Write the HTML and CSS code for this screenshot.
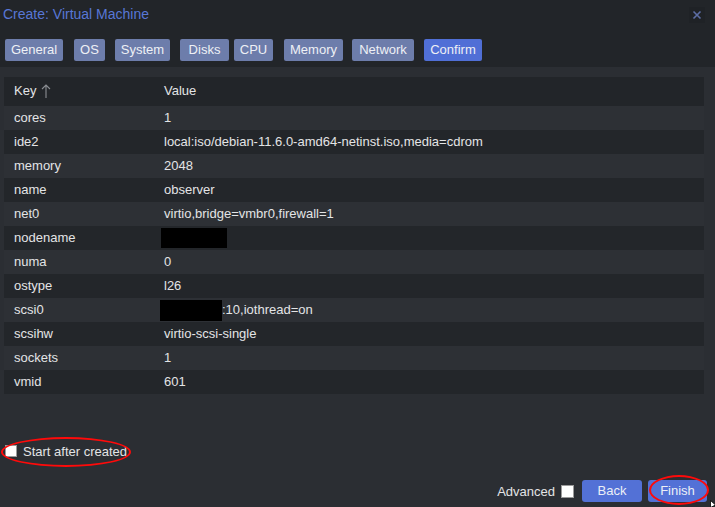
FILE: index.html
```html
<!DOCTYPE html>
<html>
<head>
<meta charset="utf-8">
<link rel="stylesheet" href="styles.css">
</head>
<body>
<div class="window">
  <div class="header">
    <div class="titlebar">
      <span class="title">Create: Virtual Machine</span>
      <span class="close"><svg width="10" height="10" viewBox="0 0 10 10"><path d="M1.5 1.5 L8.5 8.5 M8.5 1.5 L1.5 8.5" stroke="#5d6ea6" stroke-width="1.6" fill="none"/></svg></span>
    </div>
    <div class="tabs">
      <span class="tab t-general">General</span>
      <span class="tab t-os">OS</span>
      <span class="tab t-system">System</span>
      <span class="tab t-disks">Disks</span>
      <span class="tab t-cpu">CPU</span>
      <span class="tab t-memory">Memory</span>
      <span class="tab t-network">Network</span>
      <span class="tab t-confirm active">Confirm</span>
    </div>
  </div>
  <div class="main">
    <div class="grid">
      <div class="row head"><div class="key">Key <svg class="arrow" width="10" height="16" viewBox="0 0 10 16"><path d="M5 15 L5 2 M1 6 L5 2 L9 6" stroke="#8b8e93" stroke-width="1.1" fill="none"/></svg></div><div class="val">Value</div></div>
      <div class="row odd"><div class="key">cores</div><div class="val">1</div></div>
      <div class="row"><div class="key">ide2</div><div class="val">local:iso/debian-11.6.0-amd64-netinst.iso,media=cdrom</div></div>
      <div class="row odd"><div class="key">memory</div><div class="val">2048</div></div>
      <div class="row"><div class="key">name</div><div class="val">observer</div></div>
      <div class="row odd"><div class="key">net0</div><div class="val">virtio,bridge=vmbr0,firewall=1</div></div>
      <div class="row"><div class="key">nodename</div><div class="val"><span class="redact r-node"></span></div></div>
      <div class="row odd"><div class="key">numa</div><div class="val">0</div></div>
      <div class="row"><div class="key">ostype</div><div class="val">l26</div></div>
      <div class="row odd"><div class="key">scsi0</div><div class="val"><span class="redact r-scsi"></span>:10,iothread=on</div></div>
      <div class="row"><div class="key">scsihw</div><div class="val">virtio-scsi-single</div></div>
      <div class="row odd"><div class="key">sockets</div><div class="val">1</div></div>
      <div class="row"><div class="key">vmid</div><div class="val">601</div></div>
    </div>
    <div class="start">
      <span class="cb"></span><span class="start-label">Start after created</span>
    </div>
    <div class="footer">
      <span class="adv">Advanced</span><span class="cb cb-adv"></span>
      <span class="btn btn-back">Back</span>
      <span class="btn btn-finish">Finish</span>
    </div>
  </div>
  <div class="mark mark-start"></div>
  <div class="mark mark-finish"></div>
  <svg class="cursor" width="6" height="8" viewBox="0 0 6 8"><path d="M0.5 0.5 L0.5 7.5 L5.5 5 Z" fill="#ffffff" stroke="#000" stroke-width="0.8"/></svg>
</div>
</body>
</html>
```

FILE: styles.css
```css
html, body {
  margin: 0;
  padding: 0;
  background: #2b2e33;
}
body {
  font-family: "Liberation Sans", Arial, sans-serif;
  font-size: 13px;
  color: #e3e4e6;
}
.window {
  position: relative;
  width: 715px;
  height: 507px;
  overflow: hidden;
  display: flex;
  flex-direction: column;
}
.header {
  background: #222529;
  height: 67px;
  box-sizing: border-box;
  display: flex;
  flex-direction: column;
}
.titlebar {
  height: 28px;
  display: flex;
  align-items: center;
  justify-content: space-between;
  padding: 0 10px 0 3px;
}
.title {
  color: #5877d6;
  font-size: 14px;
}
.close {
  width: 16px;
  height: 16px;
  background: #1f2226;
  display: flex;
  align-items: center;
  justify-content: center;
  margin-top: 2px;
}
.tabs {
  margin-top: 11px;
  display: flex;
  padding-left: 5px;
}
.tab {
  height: 22px;
  line-height: 22px;
  background: #6d7dab;
  color: #eef0f5;
  border-radius: 2px;
  text-align: center;
  box-sizing: border-box;
}
.t-general { width: 58px; margin-right: 11px; }
.t-os { width: 31px; margin-right: 10px; }
.t-system { width: 55px; margin-right: 10px; }
.t-disks { width: 49px; margin-right: 5px; }
.t-cpu { width: 39px; margin-right: 11px; }
.t-memory { width: 59px; margin-right: 9px; }
.t-network { width: 62px; margin-right: 10px; }
.t-confirm { width: 58px; }
.tab.active { background: #506fd6; }

.main {
  flex: 1;
  display: flex;
  flex-direction: column;
  padding-top: 10px;
}
.grid {
  margin: 0 11px 0 4px;
}
.row {
  display: flex;
  height: 24px;
  box-sizing: border-box;
  padding-bottom: 1px;
  align-items: center;
  background: #23262a;
}
.row.odd { background: #2d3035; }
.row.head {
  height: 29px;
  padding-bottom: 2px;
  background: #222529;
}
.key {
  width: 160px;
  padding-left: 10px;
  box-sizing: border-box;
  display: flex;
  align-items: center;
}
.arrow { margin-left: 5px; }
.val {
  display: flex;
  align-items: center;
}
.redact {
  display: inline-block;
  background: #000;
}
.r-node { width: 66px; height: 20px; margin-left: -3px; }
.r-scsi { width: 62px; height: 21px; margin-left: -4px; margin-top: 2px; }

.start {
  margin-top: auto;
  height: 28px;
  display: flex;
  align-items: center;
  padding-left: 5px;
}
.cb {
  width: 12px;
  height: 12px;
  background: #ffffff;
  border: 1px solid #9a9a9a;
  box-sizing: border-box;
  display: inline-block;
}
.start-label { margin-left: 6px; }
.footer {
  margin-top: 10px;
  height: 32px;
  display: flex;
  align-items: center;
  justify-content: flex-end;
  padding-right: 8px;
}
.adv { margin-right: 6px; }
.cb-adv { width: 13px; height: 13px; margin-right: 8px; }
.btn {
  height: 22px;
  line-height: 22px;
  background: #5371d6;
  color: #eceff7;
  border-radius: 3px;
  text-align: center;
}
.btn-back { width: 60px; margin-right: 6px; }
.btn-finish { width: 59px; }

.mark {
  position: absolute;
  border: 2px solid #ff0a0a;
  border-radius: 50%;
  box-sizing: border-box;
}
.mark-start { left: 1px; top: 437px; width: 130px; height: 30px; }
.mark-finish { left: 649px; top: 475px; width: 60px; height: 30px; }
.cursor { position: absolute; left: 710px; top: 500px; }
```
